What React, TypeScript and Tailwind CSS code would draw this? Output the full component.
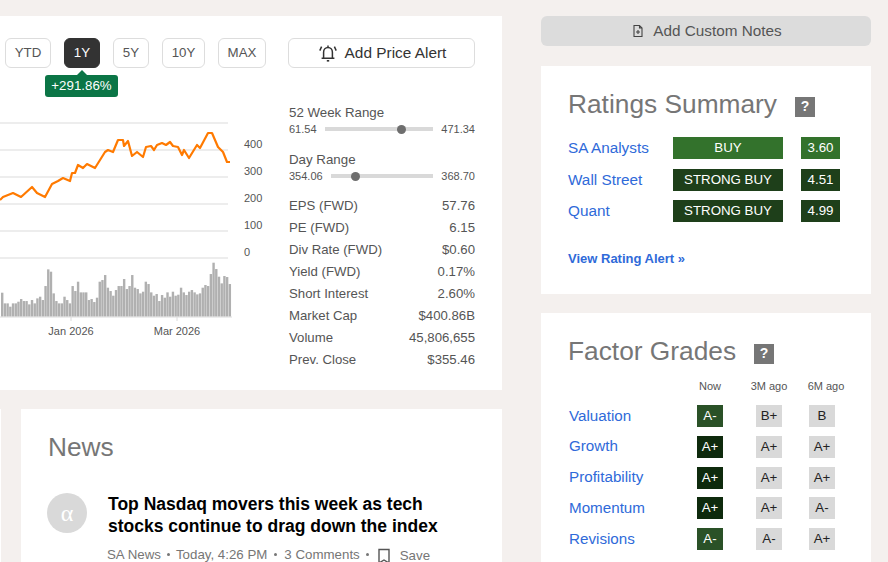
const line =
  "0,200 3,197 13,193 21,197 32,187 37,193 45,197 52,184 58,181 63,178 70,181 72,173 75,173 78,165 83,168 87,164 95,168 100,160 105,152 108,150 113,152 118,140 123,140 124,146 128,141 132,156 137,152 143,157 146,147 151,146 154,150 157,145 162,143 166,145 170,142 173,146 178,147 182,155 184,150 189,158 197,145 200,148 208,133 212,133 218,147 223,152 227,162 230,162"

const volumeTops = [
  338, 370, 370, 380, 370, 370, 365, 357, 363, 363, 373, 360, 370, 355, 350, 360, 318, 268, 275, 340, 363, 370, 370, 350, 360, 370, 318, 333, 305, 337, 337, 337, 360, 357, 366, 353, 305, 300, 285, 323, 333, 347, 330, 318, 318, 297, 327, 318, 285, 323, 327, 340, 335, 305, 312, 337, 347, 342, 363, 345, 353, 337, 350, 335, 347, 344, 323, 337, 345, 335, 330, 337, 343, 340, 323, 315, 318, 282, 248, 267, 290, 310, 288, 291, 312,
]

const ranges = [
  { label: "YTD", width: "w-[46px]" },
  { label: "1Y", width: "w-[36px]", active: true },
  { label: "5Y", width: "w-[36px]" },
  { label: "10Y", width: "w-[43px]" },
  { label: "MAX", width: "w-[48px]" },
]

const stats = [
  ["EPS (FWD)", "57.76"],
  ["PE (FWD)", "6.15"],
  ["Div Rate (FWD)", "$0.60"],
  ["Yield (FWD)", "0.17%"],
  ["Short Interest", "2.60%"],
  ["Market Cap", "$400.86B"],
  ["Volume", "45,806,655"],
  ["Prev. Close", "$355.46"],
]

const ratings = [
  { name: "SA Analysts", label: "BUY", score: "3.60", color: "bg-[#33722c]", mt: "" },
  { name: "Wall Street", label: "STRONG BUY", score: "4.51", color: "bg-[#1e3f1a]", mt: "mt-[10px]" },
  { name: "Quant", label: "STRONG BUY", score: "4.99", color: "bg-[#1e3f1a]", mt: "mt-[9px]" },
]

const grades = [
  ["Valuation", "A-", "B+", "B"],
  ["Growth", "A+", "A+", "A+"],
  ["Profitability", "A+", "A+", "A+"],
  ["Momentum", "A+", "A+", "A-"],
  ["Revisions", "A-", "A-", "A+"],
]

function Chart() {
  return (
    <svg width="270" height="222" viewBox="0 120 270 222" className="block shrink-0">
      {[123, 150, 177, 204, 231, 258].map((y) => (
        <line key={y} x1="0" x2="228" y1={y} y2={y} stroke="#dcdcdc" strokeWidth="1.2" />
      ))}
      {["400", "300", "200", "100", "0"].map((t, i) => (
        <text key={t} x="244" y={148 + i * 27} fontSize="11" fill="#555">
          {t}
        </text>
      ))}
      {volumeTops.map((top, i) => {
        const h = (410 - top) / 3
        return <rect key={i} x={1 + i * 2.71} y={316.7 - h} width="2.4" height={h} fill="#b0b0b0" />
      })}
      <line x1="0" x2="232" y1="317" y2="317" stroke="#dcdcdc" />
      <line x1="71" x2="71" y1="317" y2="321" stroke="#dcdcdc" />
      <line x1="177" x2="177" y1="317" y2="321" stroke="#dcdcdc" />
      <polyline points={line} fill="none" stroke="#ff7a00" strokeWidth="2.2" strokeLinejoin="round" />
      <text x="71" y="335" fontSize="11" fill="#555" textAnchor="middle">
        Jan 2026
      </text>
      <text x="177" y="335" fontSize="11" fill="#555" textAnchor="middle">
        Mar 2026
      </text>
    </svg>
  )
}

function RangeSlider(props: { low: string; high: string; label: string; thumb: string; track: string }) {
  const { low, high, label, thumb, track } = props
  return (
    <div>
      <div className="text-[13.3px] leading-[18px] text-[#555]">{label}</div>
      <div className="flex items-center justify-between text-[11px] leading-[14px] text-[#555]">
        <span>{low}</span>
        <div className={`relative h-[4px] bg-[#d9d9d9] ${track}`}>
          <div className={`absolute top-[-2.5px] h-[9px] w-[9px] rounded-full bg-[#6e6e6e] ${thumb}`} />
        </div>
        <span>{high}</span>
      </div>
    </div>
  )
}

function Help() {
  return (
    <span className="flex h-[20px] w-[20px] items-center justify-center bg-[#767676] text-[14px] font-bold text-white">
      ?
    </span>
  )
}

export default function App() {
  return (
    <div className="flex h-[562px] w-[888px] overflow-hidden bg-[#f4f0ee] font-['Liberation_Sans',Arial,sans-serif]">
      <div className="w-[502px] shrink-0 pt-[16px]">
        <div className="h-[374px] bg-white pt-[22px]">
          <div className="flex pl-[5px]">
            <div className="relative flex gap-[13px]">
              {ranges.map((r) => (
                <div
                  key={r.label}
                  className={`flex h-[30px] items-center justify-center rounded-[6px] border text-[13.3px] ${r.width} ${
                    r.active ? "border-[#333] bg-[#333] text-white" : "border-[#ddd] text-[#555]"
                  }`}
                >
                  {r.label}
                </div>
              ))}
              <div className="absolute left-[40px] top-[37px] flex h-[22px] w-[73px] items-center justify-center rounded-[3px] bg-[#0b7546] text-[13.3px] text-white">
                <span className="absolute left-[32px] top-[-5px] h-0 w-0 border-x-[5px] border-b-[5px] border-x-transparent border-b-[#0b7546]" />
                +291.86%
              </div>
            </div>
            <div className="ml-[22px] flex h-[30px] w-[187px] items-center justify-center gap-[8px] rounded-[6px] border border-[#ddd] pl-[2px] text-[15.4px] text-[#333]">
              <svg width="18" height="18" viewBox="0 0 18 18" fill="none" stroke="#333" strokeWidth="1.5">
                <path d="M4.6 14V8.2C4.6 5.4 6.6 3.4 9 3.4s4.4 2 4.4 4.8V14M2.6 14.2h12.8M9 1.6v1.8" />
                <path d="M7.8 16.8h2.4" strokeWidth="1.6" />
                <path d="M.8 6.6 2.6 2.6M17.2 6.6 15.4 2.6" />
              </svg>
              Add Price Alert
            </div>
          </div>
          <div className="mt-[36px] flex">
            <div className="pt-[16px]">
              <Chart />
            </div>
            <div className="ml-[19px] w-[186px]">
              <RangeSlider label="52 Week Range" low="61.54" high="471.34" track="w-[108px]" thumb="left-[72px]" />
              <div className="mt-[15px]">
                <RangeSlider label="Day Range" low="354.06" high="368.70" track="w-[102px]" thumb="left-[20px]" />
              </div>
              <div className="mt-[12px]">
                {stats.map(([k, v]) => (
                  <div key={k} className="flex h-[22px] items-center justify-between text-[13.2px] text-[#555]">
                    <span>{k}</span>
                    <span>{v}</span>
                  </div>
                ))}
              </div>
            </div>
          </div>
        </div>
        <div className="mt-[19px] flex gap-[20px]">
          <div className="w-[1px] bg-white" />
          <div className="h-[160px] flex-1 bg-white pl-[26px] pt-[21px]">
            <h2 className="ml-[1px] text-[26.3px] leading-[34px] text-[#767676]">News</h2>
            <div className="mt-[29px] flex">
              <div className="flex h-[40px] w-[40px] shrink-0 items-center justify-center rounded-full bg-[#d9d9d9] font-['Liberation_Serif',serif] text-[24px] text-white">
                α
              </div>
              <div className="ml-[21px]">
                <h3 className="text-[17.5px] font-bold leading-[22px] text-black">
                  Top Nasdaq movers this week as tech
                  <br />
                  stocks continue to drag down the index
                </h3>
                <div className="ml-[-1px] mt-[6px] flex items-center text-[13.3px] text-[#767676]">
                  <span>SA News</span>
                  <span className="mx-[6px] h-[3px] w-[3px] rounded-full bg-[#767676]" />
                  <span>Today, 4:26 PM</span>
                  <span className="mx-[7px] h-[3px] w-[3px] rounded-full bg-[#767676]" />
                  <span>3 Comments</span>
                  <span className="mx-[6px] h-[3px] w-[3px] rounded-full bg-[#767676]" />
                  <svg width="14" height="16" viewBox="0 0 14 16" fill="none" stroke="#555" strokeWidth="1.4" className="ml-[2px] mt-[3px]">
                    <path d="M2 1.5h10V15l-5-3-5 3z" />
                  </svg>
                  <span className="ml-[9px] mt-[3px]">Save</span>
                </div>
              </div>
            </div>
          </div>
        </div>
      </div>

      <div className="ml-[39px] w-[330px] shrink-0 pt-[16px]">
        <div className="flex h-[30px] items-center justify-center gap-[8px] rounded-[6px] bg-[#dcdcdc] pl-[1px] text-[15.3px] text-[#555]">
          <svg width="14" height="14" viewBox="0 0 14 14" fill="none" stroke="#444" strokeWidth="1.1">
            <path d="M3 1.5h5.5L11 4v8.5H3zM8.5 1.5V4H11M7 6v4M5 8h4" />
          </svg>
          Add Custom Notes
        </div>
        <div className="mt-[20px] h-[228px] bg-white pl-[27px] pt-[22px]">
          <div className="flex items-center gap-[18px]">
            <h2 className="text-[26.3px] leading-[32px] text-[#767676]">Ratings Summary</h2>
            <span className="mt-[5px]">
              <Help />
            </span>
          </div>
          <div className="mt-[17px]">
            {ratings.map((r) => (
              <div key={r.name} className={`flex h-[22px] items-center ${r.mt}`}>
                <span className="w-[105px] text-[15.3px] text-[#2f6ad9]">{r.name}</span>
                <span className={`flex h-[22px] w-[110px] items-center justify-center text-[13.3px] text-white ${r.color}`}>
                  {r.label}
                </span>
                <span className={`ml-[18px] flex h-[22px] w-[39px] items-center justify-center text-[13.3px] text-white ${r.color}`}>
                  {r.score}
                </span>
              </div>
            ))}
          </div>
          <div className="mt-[27px] text-[13px] font-bold text-[#2f6ad9]">View Rating Alert »</div>
        </div>
        <div className="mt-[19px] h-[260px] bg-white pl-[27px] pt-[22px]">
          <div className="flex items-center gap-[18px]">
            <h2 className="text-[26.3px] leading-[32px] text-[#767676]">Factor Grades</h2>
            <span className="mt-[5px]">
              <Help />
            </span>
          </div>
          <div className="mt-[11px] flex h-[16px] items-center text-[11px] text-[#555]">
            <span className="ml-[129px] flex w-[26px] justify-center">Now</span>
            <span className="ml-[33px] flex w-[26px] justify-center whitespace-nowrap">3M ago</span>
            <span className="ml-[31px] flex w-[26px] justify-center whitespace-nowrap">6M ago</span>
          </div>
          <div className="mt-[11px] flex flex-col gap-[8.75px]">
            {grades.map(([name, now, m3, m6]) => (
              <div key={name} className="flex h-[22px] items-center">
                <span className="w-[129px] pl-[1px] text-[15.2px] text-[#2f6ad9]">{name}</span>
                <span
                  className={`flex h-[22px] w-[26px] items-center justify-center text-[13.3px] text-white ${
                    now === "A+" ? "bg-[#0e2a0d]" : "bg-[#2a5127]"
                  }`}
                >
                  {now}
                </span>
                <span className="ml-[33px] flex h-[22px] w-[26px] items-center justify-center bg-[#d9d9d9] text-[13.3px] text-[#222]">
                  {m3}
                </span>
                <span className="ml-[27px] flex h-[22px] w-[26px] items-center justify-center bg-[#d9d9d9] text-[13.3px] text-[#222]">
                  {m6}
                </span>
              </div>
            ))}
          </div>
        </div>
      </div>
    </div>
  )
}
